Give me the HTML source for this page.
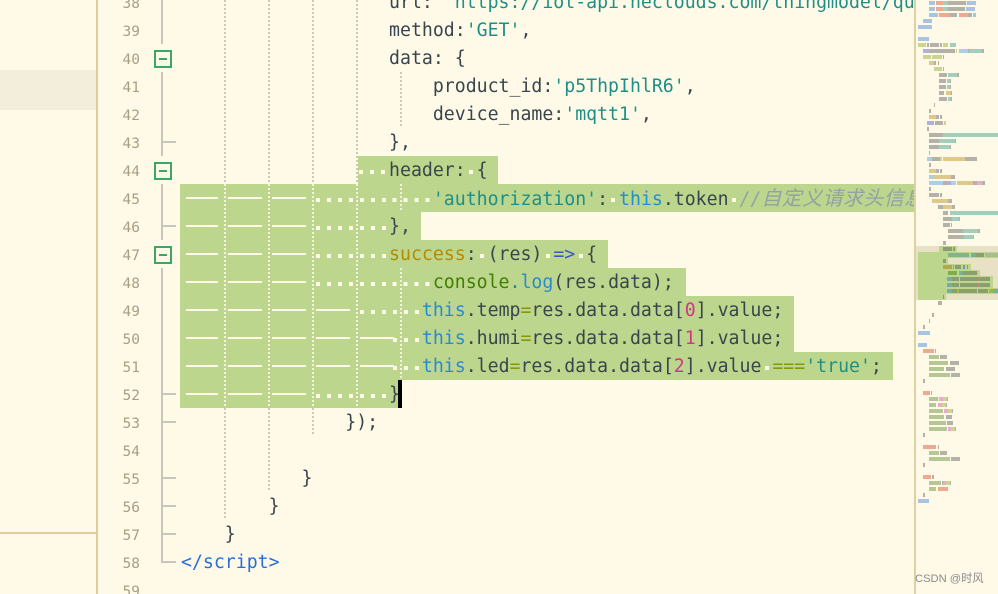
<!DOCTYPE html>
<html><head><meta charset="utf-8">
<style>
html,body{margin:0;padding:0;width:998px;height:594px;overflow:hidden;background:#fffae8}
div{position:absolute}
#root{left:0;top:0;width:998px;height:594px;overflow:hidden;background:#fffae8}
#ed{left:0;top:0;width:914px;height:594px;overflow:hidden}
.l{left:181px;margin-top:1px;height:28px;white-space:pre;font:18.2px/28px "DejaVu Sans Mono","Liberation Mono",monospace;color:#38454e;width:900px}
.n{left:110px;margin-top:2px;width:30px;text-align:right;height:28px;line-height:28px;font-family:"DejaVu Sans Mono",monospace;font-size:14.5px;color:#a89e84}
.s{background:#bdd68d;height:28px}
.g{width:2px;background:repeating-linear-gradient(180deg,#cbc9bd 0 2px,transparent 2px 4px)}
.w{width:2px;background:repeating-linear-gradient(180deg,#f2f2df 0 2px,transparent 2px 4px)}
.t{height:2px;background:#fffae8}
.d{height:4px;background:repeating-linear-gradient(90deg,#fffae8 0 4px,transparent 4px 10.96px)}
.v{background:#c8c6ba;left:161px;width:2px}
.h{background:#c8c6ba;left:161px;width:15px;height:2px}
.b{left:154px;width:14px;height:14px;border:2px solid #3aa765}
.b i{position:absolute;left:3px;top:6px;width:8px;height:2px;background:#3aa765}
.q{color:#1d8f87}.k{color:#268bd2}.c{color:#93a1a1;font-style:italic}.y{color:#b58900}.e{color:#3f7f00}.r{color:#d33682}.o{color:#859900}.a{color:#3a55cc}.u{color:#2a6dd8}
</style></head><body>
<div id="root">

<div style="left:0;top:70px;width:96px;height:40px;background:#f3eddb"></div>
<div style="left:96px;top:0;width:2px;height:594px;background:#dfcb9c"></div>
<div style="left:0;top:532px;width:96px;height:2px;background:#dfcb9c"></div>

<div id="ed">
<div class="s" style="left:358px;top:156px;width:140px"></div>
<div class="s" style="left:180px;top:184px;width:734px"></div>
<div class="s" style="left:180px;top:212px;width:241px"></div>
<div class="s" style="left:180px;top:240px;width:428px"></div>
<div class="s" style="left:180px;top:268px;width:506px"></div>
<div class="s" style="left:180px;top:296px;width:614px"></div>
<div class="s" style="left:180px;top:324px;width:614px"></div>
<div class="s" style="left:180px;top:352px;width:713px"></div>
<div class="s" style="left:180px;top:380px;width:220px"></div>

<div class="g" style="left:224px;top:0;height:520px"></div>
<div class="g" style="left:268px;top:0;height:492px"></div>
<div class="g" style="left:312px;top:0;height:436px"></div>
<div class="g" style="left:356px;top:0;height:184px"></div>
<div class="g" style="left:400px;top:72px;height:56px"></div>
<div class="w" style="left:224px;top:184px;height:224px"></div>
<div class="w" style="left:268px;top:184px;height:224px"></div>
<div class="w" style="left:312px;top:184px;height:224px"></div>
<div class="w" style="left:356px;top:184px;height:224px"></div>
<div class="w" style="left:400px;top:184px;height:28px"></div>
<div class="w" style="left:400px;top:268px;height:110px"></div>

<!-- tab marks -->
<div class="t" style="left:186px;top:197px;width:32px"></div><div class="t" style="left:228px;top:197px;width:34px"></div><div class="t" style="left:272px;top:197px;width:34px"></div>
<div class="t" style="left:186px;top:225px;width:32px"></div><div class="t" style="left:228px;top:225px;width:34px"></div><div class="t" style="left:272px;top:225px;width:34px"></div>
<div class="t" style="left:186px;top:253px;width:32px"></div><div class="t" style="left:228px;top:253px;width:34px"></div><div class="t" style="left:272px;top:253px;width:34px"></div>
<div class="t" style="left:186px;top:281px;width:32px"></div><div class="t" style="left:228px;top:281px;width:34px"></div><div class="t" style="left:272px;top:281px;width:34px"></div>
<div class="t" style="left:186px;top:309px;width:32px"></div><div class="t" style="left:228px;top:309px;width:34px"></div><div class="t" style="left:272px;top:309px;width:34px"></div><div class="t" style="left:316px;top:309px;width:34px"></div>
<div class="t" style="left:186px;top:337px;width:32px"></div><div class="t" style="left:228px;top:337px;width:34px"></div><div class="t" style="left:272px;top:337px;width:34px"></div><div class="t" style="left:316px;top:337px;width:34px"></div><div class="t" style="left:360px;top:337px;width:34px"></div>
<div class="t" style="left:186px;top:365px;width:32px"></div><div class="t" style="left:228px;top:365px;width:34px"></div><div class="t" style="left:272px;top:365px;width:34px"></div><div class="t" style="left:316px;top:365px;width:34px"></div><div class="t" style="left:360px;top:365px;width:34px"></div>
<div class="t" style="left:186px;top:393px;width:32px"></div><div class="t" style="left:228px;top:393px;width:34px"></div><div class="t" style="left:272px;top:393px;width:34px"></div>

<!-- whitespace dots -->
<div class="d" style="left:359px;top:170px;width:30px"></div>
<div class="d" style="left:469px;top:170px;width:4px"></div>
<div class="d" style="left:316px;top:198px;width:114px"></div>
<div class="d" style="left:611px;top:198px;width:4px"></div>
<div class="d" style="left:732px;top:198px;width:4px"></div>
<div class="d" style="left:316px;top:226px;width:70px"></div>
<div class="d" style="left:316px;top:254px;width:70px"></div>
<div class="d" style="left:480px;top:254px;width:4px"></div>
<div class="d" style="left:546px;top:254px;width:4px"></div>
<div class="d" style="left:579px;top:254px;width:4px"></div>
<div class="d" style="left:316px;top:282px;width:114px"></div>
<div class="d" style="left:360px;top:310px;width:60px"></div>
<div class="d" style="left:393px;top:338px;width:26px"></div>
<div class="d" style="left:393px;top:366px;width:26px"></div>
<div class="d" style="left:765px;top:366px;width:4px"></div>
<div class="d" style="left:316px;top:394px;width:70px"></div>

<div class="l" style="top:-12px">                   url: <span class="q">'https://iot-api.heclouds.com/thingmodel/query-device-property'</span></div>
<div class="l" style="top:16px">                   method:<span class="q">'GET'</span>,</div>
<div class="l" style="top:44px">                   data: {</div>
<div class="l" style="top:72px">                       product_id:<span class="q">'p5ThpIhlR6'</span>,</div>
<div class="l" style="top:100px">                       device_name:<span class="q">'mqtt1'</span>,</div>
<div class="l" style="top:128px">                   },</div>
<div class="l" style="top:156px">                   header: {</div>
<div class="l" style="top:184px;margin-top:-1px">                       <span class="q">'authorization'</span>: <span class="k">this</span>.token <span class="c">//<span style="font-family:'Noto Sans CJK SC',sans-serif;font-size:20px;letter-spacing:.4px">自定义请求头信息</span></span></div>
<div class="l" style="top:212px">                   },</div>
<div class="l" style="top:240px">                   <span class="y">success</span>: (res) <span class="a">=&gt;</span> {</div>
<div class="l" style="top:268px">                       <span class="e">console</span><span class="q">.</span><span class="k">log</span>(res.data);</div>
<div class="l" style="top:296px">                      <span class="k">this</span>.temp<span class="o">=</span>res.data.data[<span class="r">0</span>].value;</div>
<div class="l" style="top:324px">                      <span class="k">this</span>.humi<span class="o">=</span>res.data.data[<span class="r">1</span>].value;</div>
<div class="l" style="top:352px">                      <span class="k">this</span>.led<span class="o">=</span>res.data.data[<span class="r">2</span>].value <span class="o">===</span><span class="q">'true'</span>;</div>
<div class="l" style="top:380px">                   }</div>
<div class="l" style="top:408px">               });</div>
<div class="l" style="top:464px">           }</div>
<div class="l" style="top:492px">        }</div>
<div class="l" style="top:520px">    }</div>
<div class="l u" style="top:548px">&lt;/script&gt;</div>
<div style="left:398px;top:380px;width:4px;height:28px;background:#000"></div>
</div>

<!-- line numbers -->
<div class="n" style="top:-12px">38</div><div class="n" style="top:16px">39</div><div class="n" style="top:44px">40</div><div class="n" style="top:72px">41</div><div class="n" style="top:100px">42</div><div class="n" style="top:128px">43</div><div class="n" style="top:156px">44</div><div class="n" style="top:184px">45</div><div class="n" style="top:212px">46</div><div class="n" style="top:240px">47</div><div class="n" style="top:268px">48</div><div class="n" style="top:296px">49</div><div class="n" style="top:324px">50</div><div class="n" style="top:352px">51</div><div class="n" style="top:380px">52</div><div class="n" style="top:408px">53</div><div class="n" style="top:436px">54</div><div class="n" style="top:464px">55</div><div class="n" style="top:492px">56</div><div class="n" style="top:520px">57</div><div class="n" style="top:548px">58</div><div class="n" style="top:576px">59</div>

<!-- fold gutter -->
<div class="v" style="top:0;height:44px"></div>
<div class="b" style="top:50px"><i></i></div>
<div class="v" style="top:72px;height:84px"></div>
<div class="h" style="top:141px"></div>
<div class="b" style="top:162px"><i></i></div>
<div class="v" style="top:184px;height:56px"></div>
<div class="h" style="top:225px"></div>
<div class="b" style="top:246px"><i></i></div>
<div class="v" style="top:268px;height:295px"></div>
<div class="h" style="top:393px"></div>
<div class="h" style="top:421px"></div>
<div class="h" style="top:477px"></div>
<div class="h" style="top:505px"></div>
<div class="h" style="top:533px"></div>
<div class="h" style="top:561px"></div>

<!-- minimap -->
<div style="left:914px;top:0;width:2px;height:594px;background:#dfd09f"></div>
<svg style="position:absolute;left:910px;top:0" width="88" height="594" viewBox="0 0 264 1782" fill="none" stroke-width="12">
<rect x="18" y="738" width="246" height="162" fill="#e9e1c6" stroke="none"/>
<g stroke="#bdd68d" stroke-width="18">
<path d="M87 747H141M24 765H264M24 783H114M24 801H183M24 819H210M24 837H249M24 855H249M24 873H264M24 891H108"/>
</g>
<path stroke="#a9c4e0" d="M57 9H75M170 9H198M57 27H75M168 27H195M57 45H84M189 45H198M39 63H66M24 81H66M24 117H57M24 999H60M24 1035H51M24 1503H57"/>
<path stroke="#eeaa90" d="M78 9H100M78 27H100M87 45H120M147 45H174M39 1053H72M39 1179H60M39 1341H78M39 1431H63M84 1467H114"/>
<path stroke="#b3b1a8" d="M114 9H168M114 27H165M120 45H141M174 45H186M51 135H57M60 135H87M90 135H96M60 153H135M174 153H177M216 153H222M99 171H102M72 189H78M84 189H87M99 207H102M87 225H111M141 225H147M87 243H108M120 243H123M87 261H108M120 261H123M87 279H102M123 279H126M87 297H111M123 297H126M72 315H75M57 333H63M78 351H87M90 351H96M75 369H99M51 387H57M57 405H99M57 423H87M135 423H138M57 441H87M120 441H123M57 459H60M66 477H90M165 477H201M57 495H63M78 513H87M90 513H96M123 531H135M99 549H111M189 549H201M216 549H225M57 567H63M57 585H87M90 585H96M114 603H126M84 621H99M126 621H135M99 639H114M99 657H126M147 657H150M99 675H120M123 675H126M114 693H159M204 693H210M114 711H162M189 711H192M99 729H108M84 909H96M66 945H72M57 963H60M39 981H45M75 1053H78M90 1071H111M120 1089H147M108 1107H135M123 1125H150M39 1143H45M63 1179H66M81 1197H84M111 1197H114M108 1215H111M126 1233H129M108 1251H126M111 1269H129M135 1287H138M39 1305H45M84 1341H87M90 1359H111M123 1377H150M39 1395H45M66 1431H72M96 1449H99M120 1449H123M39 1485H45"/>
<path stroke="#a3cdbd" d="M100 9H114M100 27H114M120 135H138M177 153H216M114 225H141M111 243H120M111 261H120M114 297H123M99 405H264M87 423H135M87 441H120M120 639H264M126 657H147M159 693H204M162 711H189"/>
<path stroke="#ccd490" d="M24 135H48M99 135H114M138 153H141M39 171H63M66 171H96M72 207H96M102 369H108M90 477H96M99 1197H111M96 1215H108M114 1233H126M123 1287H135M108 1449H120"/>
<path stroke="#b0b0d8" d="M39 153H60M51 369H72M111 549H123"/>
<path stroke="#a8d0e6" d="M147 153H174M51 477H66M57 531H72M57 549H99M123 549H138"/>
<path stroke="#e0c78a" d="M57 189H72M108 279H123M57 351H78M99 477H165M57 513H78M72 531H123M141 549H189M66 603H114M99 621H126"/>
<path stroke="#eeaacc" d="M201 549H216M87 1197H99M84 1215H96M102 1233H114M114 1287H123M99 1449H108"/>
<path stroke="#b5c794" d="M57 1071H87M57 1089H114M57 1107H102M57 1125H120M57 1197H81M57 1215H78M57 1233H99M57 1251H102M57 1269H108M57 1287H111M57 1359H87M57 1377H120M57 1449H93M57 1467H78"/>
<path stroke="#8a9e70" d="M99 747H126M129 747H135M198 765H222M99 783H108M135 801H153M171 801H174M159 819H201M126 837H147M150 837H204M210 837H240M126 855H147M150 855H204M210 855H240M126 873H141M147 873H201M204 873H234M99 891H102"/>
<path stroke="#7fb48c" d="M114 765H177"/>
<path stroke="#74b0a0" d="M183 765H198M147 819H159M111 837H126M111 855H126M111 873H126M249 873H264"/>
<path stroke="#a8bc90" d="M225 765H264"/>
<path stroke="#b0a84c" d="M99 801H126M129 801H132"/>
<path stroke="#7f90b8" d="M159 801H165"/>
<path stroke="#80ac50" d="M114 819H141"/>
<path stroke="#c08878" d="M204 837H210M204 855H210"/>
<path stroke="#a4b840" d="M141 873H147M237 873H249"/>
</svg>

<div style="left:915px;top:571px;width:80px;height:16px;line-height:16px;font-family:'Liberation Sans','Noto Sans CJK SC',sans-serif;font-size:11.2px;color:#8b8b8b;white-space:nowrap">CSDN @时风</div>
</div>
</body></html>
